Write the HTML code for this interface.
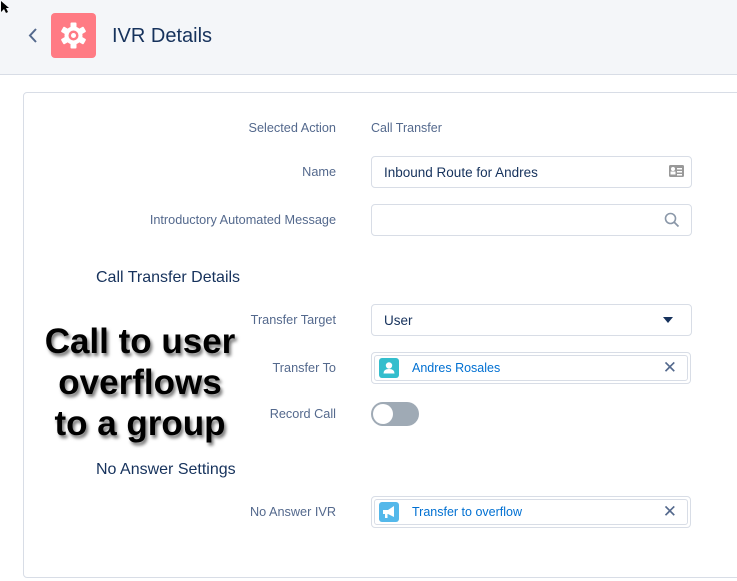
<!DOCTYPE html>
<html><head><style>
*{margin:0;padding:0;box-sizing:border-box}
body{width:737px;height:581px;overflow:hidden;background:#fff;font-family:"Liberation Sans",sans-serif;position:relative}
.hdr{position:absolute;left:0;top:0;width:737px;height:75px;background:#f4f6f9;border-bottom:1px solid #d8dde6}
.card{position:absolute;left:23px;top:92px;width:740px;height:486px;border:1px solid #d8dde6;border-radius:4px}
.lbl{position:absolute;right:401px;font-size:12.7px;color:#54698d;text-align:right;white-space:nowrap}
.inp{position:absolute;left:371px;width:321px;height:32px;border:1px solid #d8dde6;border-radius:4px;background:#fff;font-size:13.5px;color:#16325c;padding:8px 12px}
.h2{position:absolute;left:96px;font-size:16px;color:#16325c}
.pill{position:absolute;left:371px;width:320px;height:32px;border:1px solid #d8dde6;border-radius:4px;padding:2px}
.pill .in{border:1px solid #d8dde6;border-radius:3px;height:26px;position:relative}
.pill .ic{position:absolute;left:4px;top:2px;width:20px;height:20px;border-radius:3px}
.pill .t{position:absolute;left:37px;top:5px;font-size:12.5px;color:#0070d2}
.pill .x{position:absolute;right:10px;top:2px;font-size:17px;color:#54698d}
.ov{position:absolute;left:40px;font-weight:bold;font-size:35px;color:#000;text-align:center;width:200px;line-height:41px;text-shadow:2px 3px 3px #777}
</style></head><body>
<div class="hdr"></div>
<svg style="position:absolute;left:0;top:0" width="10" height="14"><path d="M1 1 L1 12 L4 9 L6 13 L8 12 L6 8 L9 8 Z" fill="#000"/></svg>
<svg style="position:absolute;left:28px;top:27px" width="10" height="17"><path d="M8 2 L2 8.5 L8 15" stroke="#54698d" stroke-width="2" fill="none"/></svg>
<div style="position:absolute;left:51px;top:13px;width:45px;height:45px;background:#ff7b84;border-radius:4px"></div>
<svg style="position:absolute;left:56px;top:18px" width="35" height="35" viewBox="0 0 35 35"><g fill="#fff" transform="translate(17.5 17.5)"><circle r="9"/><g id="t"><rect x="-3" y="-13" width="6" height="6" rx="1"/></g><use href="#t" transform="rotate(60)"/><use href="#t" transform="rotate(120)"/><use href="#t" transform="rotate(180)"/><use href="#t" transform="rotate(240)"/><use href="#t" transform="rotate(300)"/></g><circle cx="17.5" cy="17.5" r="5" fill="#ff7b84"/><circle cx="17.5" cy="17.5" r="2.5" fill="#fff"/></svg>
<div style="position:absolute;left:112px;top:25px;font-size:20px;color:#16325c">IVR Details</div>
<div class="card"></div>
<div class="lbl" style="top:121px">Selected Action</div>
<div style="position:absolute;left:371px;top:121px;font-size:12.5px;color:#54698d">Call Transfer</div>
<div class="lbl" style="top:165px">Name</div>
<div class="inp" style="top:156px">Inbound Route for Andres</div>
<svg style="position:absolute;left:668px;top:164px" width="17" height="14"><rect x="1" y="1" width="15" height="12" rx="1.5" fill="#999"/><circle cx="5" cy="5" r="2" fill="#fff"/><rect x="2.5" y="7.5" width="5" height="3" fill="#fff"/><rect x="9" y="4" width="5" height="1.5" fill="#fff"/><rect x="9" y="7" width="5" height="1.5" fill="#fff"/><rect x="9" y="10" width="5" height="1.5" fill="#fff"/></svg>
<div class="lbl" style="top:213px">Introductory Automated Message</div>
<div class="inp" style="top:204px"></div>
<svg style="position:absolute;left:664px;top:212px" width="16" height="16"><circle cx="6.5" cy="6.5" r="5" stroke="#8a97a8" stroke-width="1.6" fill="none"/><path d="M10 10 L14.5 14.5" stroke="#8a97a8" stroke-width="1.8"/></svg>
<div class="h2" style="top:269px">Call Transfer Details</div>
<div class="lbl" style="top:313px">Transfer Target</div>
<div class="inp" style="top:304px">User</div>
<svg style="position:absolute;left:663px;top:317px" width="10" height="6"><path d="M0 0 L10 0 L5 6 Z" fill="#16325c"/></svg>
<div class="lbl" style="top:361px">Transfer To</div>
<div class="pill" style="top:352px"><div class="in"><div class="ic" style="background:#34becd"><svg width="20" height="20"><circle cx="10" cy="7.5" r="3.2" fill="#fff"/><path d="M4.5 15.5 Q4.5 11 10 11 Q15.5 11 15.5 15.5 Z" fill="#fff"/></svg></div><div class="t">Andres Rosales</div><div class="x">✕</div></div></div>
<div class="lbl" style="top:407px">Record Call</div>
<div style="position:absolute;left:371px;top:402px;width:48px;height:24px;border-radius:12px;background:#9faab5"></div>
<div style="position:absolute;left:373px;top:404px;width:20px;height:20px;border-radius:50%;background:#fff"></div>
<div class="h2" style="top:461px">No Answer Settings</div>
<div class="lbl" style="top:505px">No Answer IVR</div>
<div class="pill" style="top:496px"><div class="in"><div class="ic" style="background:#54b8ea"><svg width="20" height="20"><path d="M4 8 L9 8 L15 4 L15 15 L9 12 L4 12 Z" fill="#fff"/><rect x="6" y="12" width="2.5" height="4" fill="#fff"/></svg></div><div class="t">Transfer to overflow</div><div class="x">✕</div></div></div>
<div class="ov" style="top:321px">Call to user<br>overflows<br>to a group</div>
</body></html>
